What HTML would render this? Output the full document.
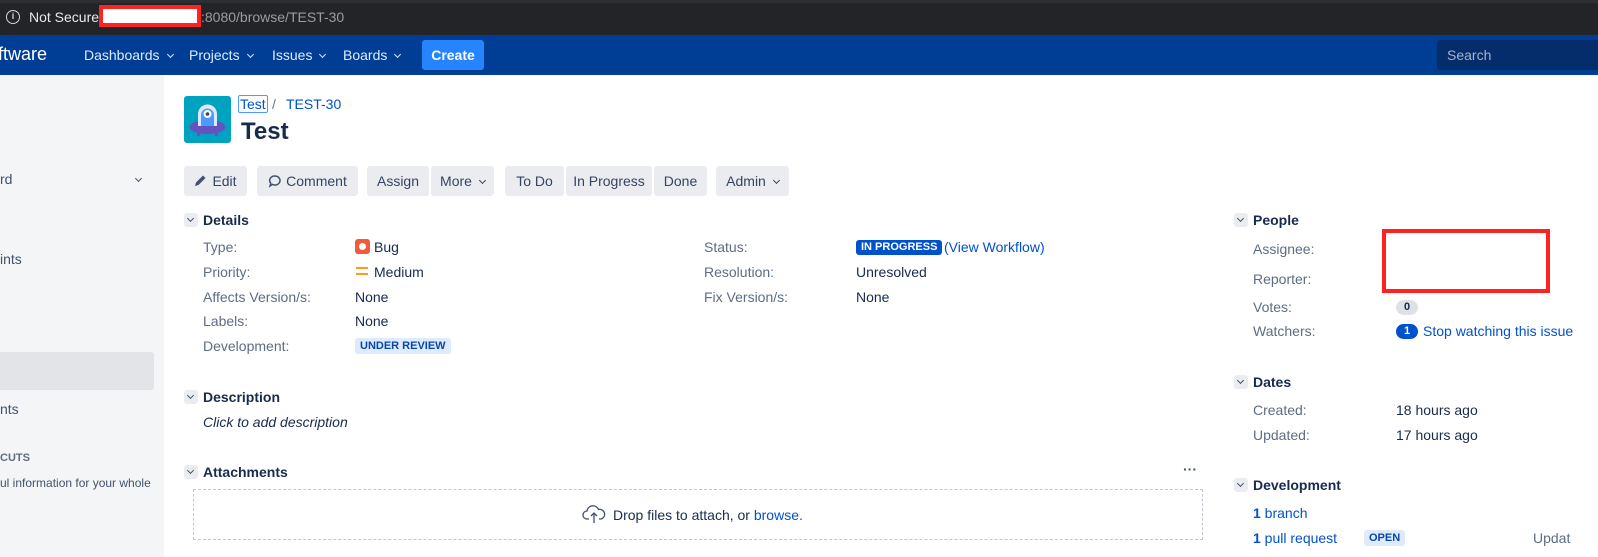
<!DOCTYPE html>
<html><head><meta charset="utf-8"><style>
*{margin:0;padding:0;box-sizing:border-box}
body{width:1598px;height:557px;overflow:hidden;background:#fff;font-family:"Liberation Sans",sans-serif;font-size:14px;color:#172b4d;position:relative}
.a{position:absolute;white-space:nowrap;line-height:18px}
.lbl{color:#5e6c84}
.lnk{color:#0052cc}
.btn{position:absolute;top:166px;height:30px;background:#ebecf0;border-radius:3px;line-height:30px;color:#344563;font-size:14px;padding:0 10px;white-space:nowrap;overflow:hidden;text-align:center}
.tw{position:absolute;width:14px;height:14px;background:#ebecf0;border-radius:3px}
.tw:after{content:"";position:absolute;left:4px;top:3px;width:4px;height:4px;border-right:1.6px solid #42526e;border-bottom:1.6px solid #42526e;transform:rotate(45deg)}
.h{font-weight:bold;font-size:14px}
.nav{position:absolute;top:46px;color:#deebff;font-size:14px;line-height:18px;white-space:nowrap}
.chev{display:inline-block;width:5px;height:5px;border-right:1.6px solid currentColor;border-bottom:1.6px solid currentColor;transform:rotate(45deg);margin-left:8px;position:relative;top:-3px}
</style></head><body>
<div style="position:absolute;left:0;top:0;width:1598px;height:35px;background:#222427"></div>
<div style="position:absolute;left:0;top:0;width:1598px;height:3px;background:#2d2f33"></div>
<div style="position:absolute;left:6px;top:10px;width:14px;height:14px;border:1.5px solid #d8d8d8;border-radius:50%;color:#d8d8d8;font-size:9px;line-height:11px;text-align:center;font-weight:bold">i</div>
<div class="a" style="left:29px;top:8px;color:#e8e8e8;font-size:14px">Not Secure</div>
<div style="position:absolute;left:99px;top:5px;width:102px;height:22px;border:4px solid #f22;background:#fff"></div>
<div class="a" style="left:201px;top:8px;color:#9a9ca0;font-size:14px">:8080/browse/TEST-30</div>
<div style="position:absolute;left:0;top:35px;width:1598px;height:40px;background:#003e95"></div>
<div class="a" style="left:-2px;top:44px;color:#fff;font-size:18px;line-height:20px">ftware</div>
<div class="nav" style="left:84px">Dashboards<span class="chev"></span></div>
<div class="nav" style="left:189px">Projects<span class="chev"></span></div>
<div class="nav" style="left:272px">Issues<span class="chev"></span></div>
<div class="nav" style="left:343px">Boards<span class="chev"></span></div>
<div style="position:absolute;left:422px;top:40px;width:62px;height:30px;background:#2684ff;border-radius:3px;color:#fff;font-weight:bold;text-align:center;line-height:30px">Create</div>
<div style="position:absolute;left:1437px;top:40px;width:170px;height:30px;background:#052d6b;border-radius:3px"></div>
<div class="a" style="left:1447px;top:46px;color:#a5b3cc">Search</div>
<div style="position:absolute;left:0;top:75px;width:164px;height:482px;background:#f4f5f7"></div>
<div style="position:absolute;left:0;top:352px;width:154px;height:38px;background:#e3e4e8;border-radius:0 3px 3px 0"></div>
<div class="a" style="left:0;top:170px;color:#42526e">rd</div>
<div class="a" style="left:136px;top:170px;color:#42526e"><span class="chev" style="margin:0"></span></div>
<div class="a" style="left:0;top:250px;color:#42526e">ints</div>
<div class="a" style="left:0;top:400px;color:#42526e">nts</div>
<div class="a" style="left:0;top:449px;color:#5e6c84;font-size:11px;font-weight:bold">CUTS</div>
<div class="a" style="left:0;top:474px;color:#42526e;font-size:12px">ul information for your whole</div>
<svg style="position:absolute;left:184px;top:96px" width="47" height="47" viewBox="0 0 47 47"><rect width="47" height="47" rx="3" fill="#00a3bf"/><ellipse cx="23.5" cy="31" rx="18" ry="7" fill="#6554c0"/><rect x="13" y="33" width="3" height="7" fill="#6554c0"/><rect x="31" y="33" width="3" height="7" fill="#6554c0"/><path d="M14 30 V18 a9.5 9.5 0 0 1 19 0 V30 Z" fill="#deebff"/><path d="M17 30 V19 a6.5 6.5 0 0 1 13 0 V30 Z" fill="#4c9aff"/><circle cx="23.5" cy="18" r="4" fill="#fff"/><circle cx="23.5" cy="18" r="1.8" fill="#344563"/></svg>
<div class="a" style="left:238px;top:95px;border:1.5px solid #4c9aff;border-radius:2px;padding:0 1px;color:#0052cc;line-height:16px">Test</div>
<div class="a" style="left:272px;top:95px;color:#6b778c">/</div>
<div class="a" style="left:286px;top:95px;color:#0052cc">TEST-30</div>
<div class="a" style="left:241px;top:118px;font-size:24px;line-height:28px;font-weight:bold">Test</div>
<div class="btn" style="left:184px;width:63px"><svg width="13" height="13" viewBox="0 0 13 13" style="vertical-align:-1px;margin-right:5px"><path d="M1 12 L2 8.5 L9 1.5 L11.5 4 L4.5 11 Z" fill="#42526e"/></svg>Edit</div>
<div class="btn" style="left:257px;width:101px;padding:0"><svg width="14" height="14" viewBox="0 0 14 14" style="vertical-align:-2px;margin-right:4px"><path d="M7 2 a5 4.5 0 1 1 -2.5 8.4 L2 12 L2.8 9.3 A5 4.5 0 0 1 7 2 Z" fill="none" stroke="#42526e" stroke-width="1.5"/></svg>Comment</div>
<div class="btn" style="left:367px;width:62px;padding:0">Assign</div>
<div class="btn" style="left:431px;width:63px;padding:0">More<span class="chev"></span></div>
<div class="btn" style="left:505px;width:59px;padding:0">To Do</div>
<div class="btn" style="left:566px;width:86px;padding:0">In Progress</div>
<div class="btn" style="left:654px;width:53px;padding:0">Done</div>
<div class="btn" style="left:716px;width:73px;padding:0">Admin<span class="chev"></span></div>
<div class="tw" style="left:184px;top:213px"></div><div class="a h" style="left:203px;top:211px">Details</div>
<div class="a lbl" style="left:203px;top:238px">Type:</div>
<div style="position:absolute;left:355px;top:239px;width:15px;height:15px;background:#f15a3a;border-radius:3px"><div style="position:absolute;left:4px;top:4px;width:7px;height:7px;background:#fff;border-radius:50%"></div></div>
<div class="a" style="left:374px;top:238px">Bug</div>
<div class="a lbl" style="left:203px;top:263px">Priority:</div>
<div style="position:absolute;left:356px;top:267px;width:12px;height:2px;background:#ff991f"></div>
<div style="position:absolute;left:356px;top:273px;width:12px;height:2px;background:#ff991f"></div>
<div class="a" style="left:374px;top:263px">Medium</div>
<div class="a lbl" style="left:203px;top:288px">Affects Version/s:</div><div class="a" style="left:355px;top:288px">None</div>
<div class="a lbl" style="left:203px;top:312px">Labels:</div><div class="a" style="left:355px;top:312px">None</div>
<div class="a lbl" style="left:203px;top:337px">Development:</div>
<div class="a" style="left:355px;top:338px;background:#deebff;color:#0747a6;font-size:11px;font-weight:bold;padding:0 5px;line-height:16px;border-radius:3px">UNDER REVIEW</div>
<div class="a lbl" style="left:704px;top:238px">Status:</div>
<div class="a" style="left:856px;top:240px;background:#0052cc;color:#fff;font-size:11px;font-weight:bold;padding:0 5px;line-height:15px;border-radius:3px">IN PROGRESS</div>
<div class="a lnk" style="left:944px;top:238px">(View Workflow)</div>
<div class="a lbl" style="left:704px;top:263px">Resolution:</div><div class="a" style="left:856px;top:263px">Unresolved</div>
<div class="a lbl" style="left:704px;top:288px">Fix Version/s:</div><div class="a" style="left:856px;top:288px">None</div>
<div class="tw" style="left:184px;top:390px"></div><div class="a h" style="left:203px;top:388px">Description</div>
<div class="a" style="left:203px;top:413px;font-style:italic">Click to add description</div>
<div class="tw" style="left:184px;top:465px"></div><div class="a h" style="left:203px;top:463px">Attachments</div>
<div class="a" style="left:1183px;top:460px;font-weight:bold;color:#42526e">···</div>
<div style="position:absolute;left:193px;top:489px;width:1010px;height:51px;border:1px dashed #c1c7d0"></div>
<svg style="position:absolute;left:582px;top:504px" width="24" height="20" viewBox="0 0 24 20"><path d="M7 15 H5 a4 4 0 0 1 0-8 a6 6 0 0 1 11.5-1.5 a4.5 4.5 0 0 1 2.5 9.5 H17" fill="none" stroke="#42526e" stroke-width="1.3"/><path d="M12 19 V9 M9 12 L12 9 L15 12" fill="none" stroke="#42526e" stroke-width="1.3"/></svg>
<div class="a" style="left:613px;top:506px">Drop files to attach, or <span class="lnk">browse.</span></div>
<div class="tw" style="left:1234px;top:213px"></div><div class="a h" style="left:1253px;top:211px">People</div>
<div class="a lbl" style="left:1253px;top:240px">Assignee:</div>
<div class="a lbl" style="left:1253px;top:270px">Reporter:</div>
<div style="position:absolute;left:1382px;top:229px;width:168px;height:64px;border:4px solid #f22"></div>
<div class="a lbl" style="left:1253px;top:298px">Votes:</div>
<div class="a" style="left:1396px;top:300px;background:#dfe1e6;font-size:11px;font-weight:bold;line-height:15px;padding:0 8px;border-radius:8px">0</div>
<div class="a lbl" style="left:1253px;top:322px">Watchers:</div>
<div class="a" style="left:1396px;top:324px;background:#0052cc;color:#fff;font-size:11px;font-weight:bold;line-height:15px;padding:0 8px;border-radius:8px">1</div>
<div class="a lnk" style="left:1423px;top:322px">Stop watching this issue</div>
<div class="tw" style="left:1234px;top:375px"></div><div class="a h" style="left:1253px;top:373px">Dates</div>
<div class="a lbl" style="left:1253px;top:401px">Created:</div><div class="a" style="left:1396px;top:401px">18 hours ago</div>
<div class="a lbl" style="left:1253px;top:426px">Updated:</div><div class="a" style="left:1396px;top:426px">17 hours ago</div>
<div class="tw" style="left:1234px;top:478px"></div><div class="a h" style="left:1253px;top:476px">Development</div>
<div class="a lnk" style="left:1253px;top:504px"><b>1</b> branch</div>
<div class="a lnk" style="left:1253px;top:529px"><b>1</b> pull request</div>
<div class="a" style="left:1364px;top:530px;background:#deebff;color:#0747a6;font-size:11px;font-weight:bold;padding:0 5px;line-height:16px;border-radius:3px">OPEN</div>
<div class="a lbl" style="left:1533px;top:529px">Updat</div>
</body></html>
